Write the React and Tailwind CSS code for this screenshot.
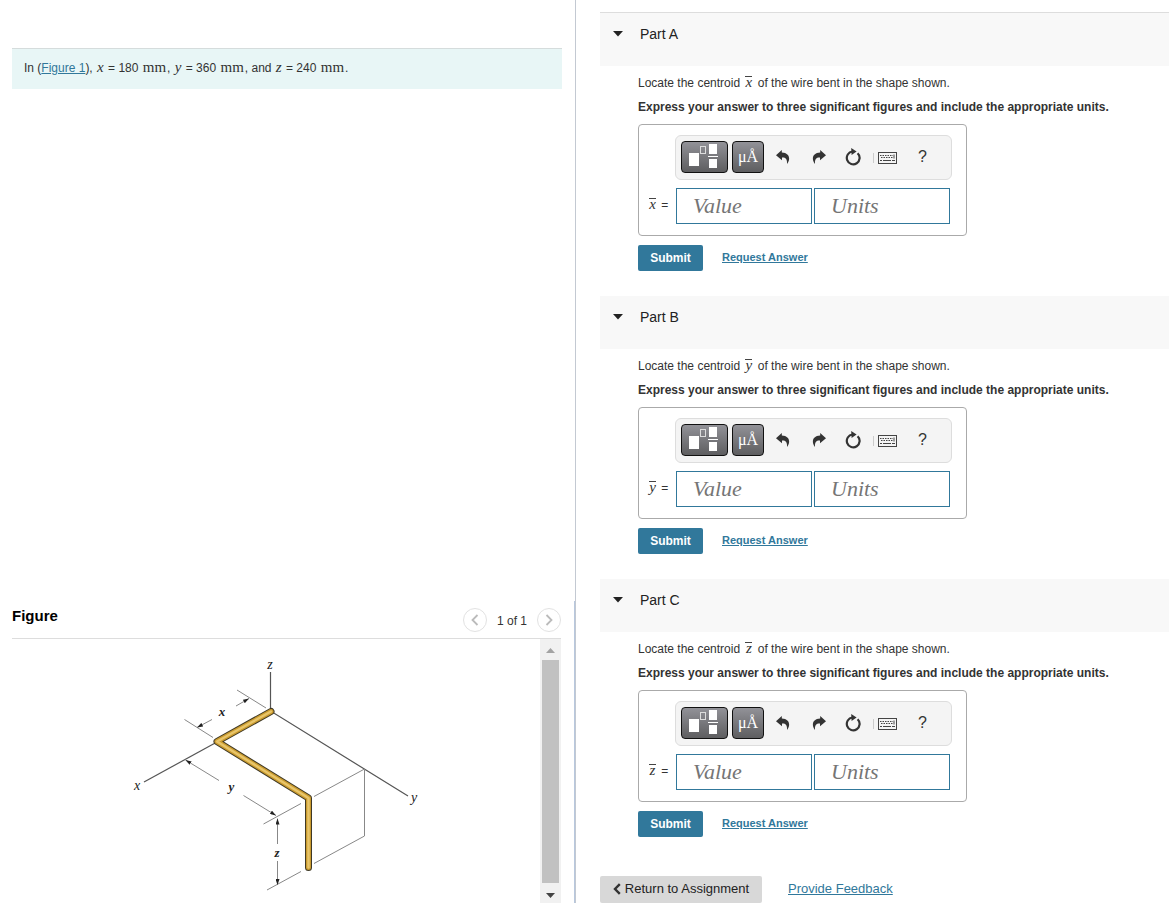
import { useState } from 'react'

const PARTS = [
  { id: 'A', symbol: 'x' },
  { id: 'B', symbol: 'y' },
  { id: 'C', symbol: 'z' },
]

function Var({ children }) {
  return <i className="px-px font-['Liberation_Serif',serif] text-[15px] leading-none">{children}</i>
}

function Bar({ children }) {
  return (
    <i className="mx-[2px] inline-block w-[7px] border-t border-[#444] text-center font-['Liberation_Serif',serif] text-[15px] leading-[10px]">
      {children}
    </i>
  )
}

function Mm() {
  return <span className="px-px font-['Liberation_Serif',serif] text-[15px] leading-none">mm</span>
}

function TemplateIcon() {
  return (
    <svg width="32" height="26" viewBox="0 0 32 26" aria-hidden="true">
      <rect x="0" y="9" width="10" height="13" fill="#fff" />
      <rect x="11.5" y="2.5" width="5" height="7" fill="none" stroke="#ddd" />
      <rect x="20" y="0" width="8" height="10" fill="#fff" />
      <rect x="19" y="12" width="10" height="1" fill="#fff" />
      <rect x="20" y="15" width="8" height="9" fill="#fff" />
    </svg>
  )
}

function UndoIcon({ flip }) {
  return (
    <svg width="14" height="14" viewBox="0 0 14 14" className={flip ? '-scale-x-100' : ''} aria-hidden="true">
      <path d="M5.8 0 L0 5.2 L6 10.2 V7.5 C9.4 7.1 11.4 8.8 11 14 C14.8 9.4 13.8 2.8 5.8 2.5 Z" fill="#333" />
    </svg>
  )
}

function ResetIcon() {
  return (
    <svg width="18" height="18" viewBox="0 0 18 18" aria-hidden="true">
      <path d="M8.5 3.5 A6.4 6.4 0 1 0 13.6 5.2" fill="none" stroke="#333" strokeWidth="2.2" />
      <path d="M7.2 0 L12.6 3.6 L7.6 7 Z" fill="#333" />
    </svg>
  )
}

function KeyboardIcon() {
  return (
    <svg width="19" height="12" viewBox="0 0 19 12" aria-hidden="true">
      <rect x="0.5" y="0.5" width="18" height="11" fill="#f4f4f4" stroke="#444" />
      <path d="M2 3.5h13M3 5.5h12" stroke="#444" strokeDasharray="1.5 1" />
      <path d="M2 8.5h2M5 8.5h8M14 8.5h3M16 2.5v4" stroke="#444" />
    </svg>
  )
}

function Toolbar() {
  const dark = 'flex h-8 items-center justify-center rounded border border-[#111] bg-linear-to-b from-[#929298] to-[#5e5e60]'
  return (
    <div className="flex h-[45px] items-center rounded-md border border-[#ddd] bg-[#f4f4f4] px-[5px] pb-[2px]">
      <button type="button" aria-label="Templates" className={`${dark} w-[47px]`}>
        <TemplateIcon />
      </button>
      <button type="button" aria-label="Symbols" className={`${dark} ml-1 w-8 font-['Liberation_Serif',serif] text-base text-white`}>
        μÅ
      </button>
      <button type="button" aria-label="Undo" className="ml-3">
        <UndoIcon />
      </button>
      <button type="button" aria-label="Redo" className="ml-[22px]">
        <UndoIcon flip />
      </button>
      <button type="button" aria-label="Reset" className="ml-[18px]">
        <ResetIcon />
      </button>
      <span className="mt-[3px] ml-[11px] h-[10px] w-px bg-[#ccc]" />
      <button type="button" aria-label="Keyboard" className="ml-1 pt-[3px]">
        <KeyboardIcon />
      </button>
      <button type="button" aria-label="Help" className="ml-[21px] text-base text-[#333]">
        ?
      </button>
    </div>
  )
}

function Part({ id, symbol }) {
  const [value, setValue] = useState('')
  const [units, setUnits] = useState('')
  const field = "h-9 w-[136px] border border-[#31789b] bg-white px-4 font-['Liberation_Serif',serif] text-[22px] italic outline-none placeholder:text-[#757575]"

  return (
    <section>
      <h2 className="h-[53px] bg-[#f8f8f8] pt-[11px] pl-3">
        <button type="button" className="flex items-center gap-4 text-sm leading-5 text-[#222]">
          <svg width="12" height="6" viewBox="0 0 12 6" aria-hidden="true">
            <path d="M1 0h10L6 5.5Z" fill="#222" />
          </svg>
          Part {id}
        </button>
      </h2>
      <form className="pt-[5px] pr-4 pb-[25px] pl-[38px]" onSubmit={e => e.preventDefault()}>
        <p className="h-6 leading-6">
          Locate the centroid <Bar>{symbol}</Bar> of the wire bent in the shape shown.
        </p>
        <p className="leading-6 font-bold">
          Express your answer to three significant figures and include the appropriate units.
        </p>
        <div className="mt-[5px] flex h-28 w-[329px] rounded border border-[#aaa] pt-[10px]">
          <div className="w-9 shrink-0 pt-[62px] pl-2 whitespace-nowrap">
            <Bar>{symbol}</Bar> =
          </div>
          <div className="w-[277px]">
            <Toolbar />
            <div className="mt-2 flex gap-[2px] pl-px">
              <input
                aria-label={`Part ${id} value`}
                placeholder="Value"
                value={value}
                onChange={e => setValue(e.target.value)}
                className={field}
              />
              <input
                aria-label={`Part ${id} units`}
                placeholder="Units"
                value={units}
                onChange={e => setUnits(e.target.value)}
                className={field}
              />
            </div>
          </div>
        </div>
        <div className="mt-[9px] flex items-center">
          <button type="submit" className="h-[26px] w-[65px] rounded-xs bg-[#31789b] text-xs font-bold text-white">
            Submit
          </button>
          <a href="#answer" className="ml-[19px] pb-px text-[11px] font-bold text-[#31789b] underline">
            Request Answer
          </a>
        </div>
      </form>
    </section>
  )
}

function WireFigure() {
  const wire = 'M271 711.5 L217 741.5 L308.5 798 V867.5'
  return (
    <svg viewBox="120 639 310 263" className="ml-[108px] h-[263px] w-[310px]" role="img" aria-label="Bent wire on x, y, z axes">
      <defs>
        <marker id="tip" viewBox="0 0 6 4" refX="6" refY="2" markerWidth="6" markerHeight="4" markerUnits="userSpaceOnUse" orient="auto-start-reverse">
          <path d="M0 0L6 2L0 4Z" fill="#222" />
        </marker>
      </defs>
      <g fill="none" stroke="#555" strokeWidth="1.2">
        <path d="M270.5 672V711L408 796" />
        <path d="M217 742L144 782" />
      </g>
      <g fill="none" stroke="#888">
        <path d="M237 690L266 708M184.5 719.5L213 737.5" />
        <path d="M314 796.5L364.5 769V836L314 863.5" />
        <path d="M301 803.5L263.5 824M301 871.5L267 890" />
        <path d="M236 706L249 698.5" markerEnd="url(#tip)" />
        <path d="M212 719.5L197 727.5" markerEnd="url(#tip)" />
        <path d="M219 780.5L185.5 760" markerEnd="url(#tip)" />
        <path d="M243.5 795.5L276 815.5" markerEnd="url(#tip)" />
        <path d="M277.5 844V818.5" markerEnd="url(#tip)" />
        <path d="M277.5 861V885" markerEnd="url(#tip)" />
      </g>
      <g fill="none" strokeLinecap="round" strokeLinejoin="round">
        <path d={wire} stroke="#3f3926" strokeWidth="7" />
        <path d={wire} stroke="#c99a2e" strokeWidth="5" />
        <path d={wire} stroke="#e8c56a" strokeWidth="2.5" />
      </g>
      <g fontFamily="'Liberation Serif', serif" fontStyle="italic" fontSize="14" fill="#222" textAnchor="middle">
        <text x="270" y="669">z</text>
        <text x="137" y="790">x</text>
        <text x="414" y="802">y</text>
        <g fontWeight="bold" fontSize="13">
          <text x="222" y="716">x</text>
          <text x="231.5" y="791">y</text>
          <text x="277" y="857">z</text>
        </g>
      </g>
    </svg>
  )
}

function Pager({ label, path }) {
  return (
    <button type="button" aria-label={label} className="flex size-6 items-center justify-center rounded-full border border-[#e2e2e2]">
      <svg width="8" height="12" viewBox="0 0 8 12" aria-hidden="true">
        <path d={path} fill="none" stroke="#bbb" strokeWidth="1.8" />
      </svg>
    </button>
  )
}

function FigurePanel() {
  return (
    <section className="border-r border-[#b8c8de] pr-[13px] pl-3">
      <div className="flex h-[38px] items-center border-b border-[#ddd]">
        <h2 className="flex-1 pb-2 text-[15px] font-bold text-black">Figure</h2>
        <Pager label="Previous figure" path="M6.5 1L1.5 6L6.5 11" />
        <span className="px-[10px] pt-[2px] text-xs">1 of 1</span>
        <Pager label="Next figure" path="M1.5 1L6.5 6L1.5 11" />
      </div>
      <div className="flex h-[264px]">
        <div className="min-w-0 flex-1 overflow-hidden">
          <WireFigure />
        </div>
        <div className="flex w-[21px] flex-col items-center bg-[#f1f1f1]">
          <button type="button" aria-label="Scroll up" className="flex h-[21px] w-full items-center justify-center pt-[2px]">
            <svg width="9" height="5" viewBox="0 0 9 5" aria-hidden="true">
              <path d="M0 5L4.5 0L9 5Z" fill="#a3a3a3" />
            </svg>
          </button>
          <div className="h-[223px] w-[17px] bg-[#c1c1c1]" />
          <button type="button" aria-label="Scroll down" className="flex w-full flex-1 items-center justify-center pt-1">
            <svg width="9" height="5" viewBox="0 0 9 5" aria-hidden="true">
              <path d="M0 0L4.5 5L9 0Z" fill="#444" />
            </svg>
          </button>
        </div>
      </div>
    </section>
  )
}

export default function App() {
  return (
    <div className="flex min-h-screen bg-white font-['Liberation_Sans',Arial,sans-serif] text-xs text-[#333]">
      <main className="flex w-[576px] shrink-0 flex-col justify-between border-r border-[#c3c9d2] pt-12">
        <p className="mr-[13px] ml-3 h-[41px] border-t border-[#d5dcdc] bg-[#e8f6f6] px-3 leading-[38px]">
          In (
          <a href="#figure" className="text-[#31789b] underline">
            Figure 1
          </a>
          ), <Var>x</Var> = 180 <Mm />, <Var>y</Var> = 360 <Mm />, and <Var>z</Var> = 240 <Mm />.
        </p>
        <FigurePanel />
      </main>

      <div className="min-w-0 flex-1 pt-3 pl-6">
        <div className="border-t border-[#ddd]">
          {PARTS.map(part => (
            <Part key={part.id} id={part.id} symbol={part.symbol} />
          ))}
        </div>
        <div className="mt-[14px] flex items-center text-[13px]">
          <button type="button" className="flex h-[27px] w-[162px] items-center justify-center gap-1 rounded-xs bg-[#d8d8d8] pb-[2px] text-[#222]">
            <svg width="8" height="12" viewBox="0 0 8 12" aria-hidden="true">
              <path d="M6.8 1.2L2 6L6.8 10.8" fill="none" stroke="#333" strokeWidth="2.4" />
            </svg>
            Return to Assignment
          </button>
          <a href="#feedback" className="ml-[26px] pb-[2px] text-[#31789b] underline">
            Provide Feedback
          </a>
        </div>
      </div>
    </div>
  )
}
